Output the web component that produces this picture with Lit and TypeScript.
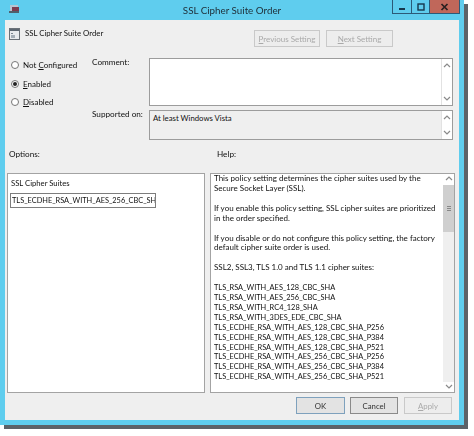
import { LitElement, html, css, svg } from "lit";
import { customElement } from "lit/decorators.js";

const helpText = [
  ["This policy setting determines the cipher suites used by the", "Secure Socket Layer (SSL)."],
  ["If you enable this policy setting, SSL cipher suites are prioritized", "in the order specified."],
  ["If you disable or do not configure this policy setting, the factory", "default cipher suite order is used."],
  ["SSL2, SSL3, TLS 1.0 and TLS 1.1 cipher suites:"],
];
const suites = [
  "TLS_RSA_WITH_AES_128_CBC_SHA",
  "TLS_RSA_WITH_AES_256_CBC_SHA",
  "TLS_RSA_WITH_RC4_128_SHA",
  "TLS_RSA_WITH_3DES_EDE_CBC_SHA",
  "TLS_ECDHE_RSA_WITH_AES_128_CBC_SHA_P256",
  "TLS_ECDHE_RSA_WITH_AES_128_CBC_SHA_P384",
  "TLS_ECDHE_RSA_WITH_AES_128_CBC_SHA_P521",
  "TLS_ECDHE_RSA_WITH_AES_256_CBC_SHA_P256",
  "TLS_ECDHE_RSA_WITH_AES_256_CBC_SHA_P384",
  "TLS_ECDHE_RSA_WITH_AES_256_CBC_SHA_P521",
];

const up = svg`<path d="M2 6 L5 3 L8 6" fill="none" stroke="#8a8a8a" stroke-width="1.2"/>`;
const down = svg`<path d="M2 3 L5 6 L8 3" fill="none" stroke="#8a8a8a" stroke-width="1.2"/>`;
const arrow = (p: unknown) => html`<svg class="arrow" width="10" height="9" viewBox="0 0 10 9">${p}</svg>`;

@customElement("app-root")
export class AppRoot extends LitElement {
  static styles = css`
    :host { display: block; width: 474px; height: 436px; background: #fff; overflow: hidden;
      font-family: "Lato", "Noto Sans", sans-serif; font-size: 8px; color: #111; white-space: nowrap; }
    * { box-sizing: border-box; }
    .window { width: 464px; height: 425px; background: #5fcdee; padding: 0 5px 5px 5px;
      box-shadow: 4px 4px 0 #5c6268; display: flex; flex-direction: column; filter: blur(0.3px); }
    .titlebar { height: 20px; flex: none; display: grid; grid-template-columns: 1fr auto 1fr; align-items: center; }
    .app { display: block; margin-left: 3px; margin-top: -1px; }
    .title { font-size: 9.8px; color: #20323c; margin-top: -1px; }
    .controls { justify-self: end; align-self: start; display: flex; height: 14px; border: 1px solid #2c5a78; border-top: none; margin-right: -1px; }
    .controls span { display: flex; align-items: center; justify-content: center; width: 18px; }
    .controls .close { width: 30px; background: #c0675a; }
    .controls span + span { border-left: 1px solid #2c5a78; }
    .body { flex: 1; background: #efefef; padding: 8px 6px 0 2px; display: flex; flex-direction: column; min-height: 0; }
    .head { display: flex; justify-content: space-between; height: 20px; padding-right: 60px; padding-left: 2px; flex: none; }
    .doc { display: flex; align-items: flex-start; gap: 5px; font-size: 7.8px; line-height: 11px; }
    .nav { display: flex; gap: 6px; margin-top: 2px; }
    .btn { height: 17px; border: 1px solid #c9c9c9; background: #ededed; display: flex; align-items: center; justify-content: center; color: #a9a9a9; font-size: 8px; }
    .nav .btn:first-child { width: 66px; }
    .nav .btn:last-child { width: 67px; }
    u { text-decoration-thickness: 1px; text-underline-offset: 1px; }
    .config { display: grid; grid-template-columns: 85px 57px 304px; margin-top: 14px; height: 82px; flex: none; }
    .radios { display: flex; flex-direction: column; gap: 7.6px; margin-top: -2.5px; padding-left: 4px; }
    .radio { display: flex; align-items: center; gap: 4px; height: 11px; }
    .dot { width: 8px; height: 8px; border-radius: 50%; border: 1px solid #777; background: #fff; display: flex; align-items: center; justify-content: center; flex: none; }
    .dot i { width: 4px; height: 4px; border-radius: 50%; background: #222; }
    .labels { display: flex; flex-direction: column; gap: 39px; margin-top: -6.5px; font-size: 8.2px; }
    .labels span { line-height: 13px; height: 13px; }
    .boxes { display: flex; flex-direction: column; gap: 4px; margin-top: -4px; }
    .box { border: 1px solid #9c9c9c; display: flex; }
    .box.comment { height: 48px; background: #fff; }
    .box.support { height: 30px; background: #efefef; }
    .box .txt { flex: 1; padding: 2px 3px; font-size: 7.75px; }
    .bar { width: 11px; flex: none; background: #fff; display: flex; flex-direction: column; align-items: center; justify-content: space-between; padding: 2px 0; border-left: 1px solid #e2e2e2; }
    .panes-head { display: grid; grid-template-columns: 208px 1fr; padding-left: 2px; margin-top: 4px; height: 25px; line-height: 13px; font-size: 8.2px; flex: none; }
    .panes { display: grid; grid-template-columns: 198px 245px; gap: 5px; height: 213px; flex: none; }
    .pane { border: 1px solid #a3a3a3; background: #fff; }
    .options { padding: 3px 2px; font-size: 7.7px; }
    .options p { margin: 0 0 4px 1px; line-height: 12px; }
    .input { width: 146px; height: 15px; border: 1px solid #7d7d7d; padding: 0 1px; line-height: 13px; overflow: hidden; color: #111; font-size: 7.4px; }
    .help { display: flex; }
    .text { flex: 1; padding: 0 3px; overflow: hidden; }
    .text p { margin: 0 0 10px; }
    .text div { height: 9.9px; line-height: 9.9px; }
    .text .list { font-size: 7.4px; }
    .scroll { width: 11px; flex: none; display: flex; flex-direction: column; align-items: center; padding-bottom: 1px; }
    .scroll .track { width: 100%; height: 47px; background: #cfcfcf; display: flex; align-items: center; justify-content: center; margin-top: 2px; }
    .scroll .grip { width: 4px; height: 5px; background: repeating-linear-gradient(#888 0 1px, transparent 1px 2px); }
    .scroll .sp { flex: 1; background: #efefef; width: 100%; }
    .footer { display: flex; justify-content: flex-end; gap: 5px; margin-top: 11px; padding-right: 1px; flex: none; }
    .footer .btn { width: 48px; height: 17px; font-size: 7.8px; }
    .footer .ok { border: 1px solid #7ea1bd; background: #e3e3e3; color: #333; width: 49px; }
    .footer .cancel { border: 1px solid #8a8a8a; background: #e3e3e3; color: #333; margin-right: 1px; }
  `;

  render() {
    return html`<div class="window">
      <div class="titlebar">
        <svg class="app" width="13" height="11" viewBox="0 0 13 11">
          <rect x="2" y="1" width="8" height="6" fill="#b8c4d0"/>
          <rect x="4" y="3" width="7" height="5" fill="#7b3b4e"/>
          <rect x="1" y="7" width="10" height="2" fill="#50606c"/>
        </svg>
        <div class="title">SSL Cipher Suite Order</div>
        <div class="controls">
          <span><svg width="8" height="8" viewBox="0 0 8 8"><rect x="1" y="5" width="6" height="2" fill="#16384e"/></svg></span>
          <span><svg width="8" height="8" viewBox="0 0 8 8"><rect x="1" y="1" width="6" height="6" fill="none" stroke="#16384e" stroke-width="1.4"/></svg></span>
          <span class="close"><svg width="9" height="8" viewBox="0 0 9 8"><path d="M1.5 1 L7.5 7 M7.5 1 L1.5 7" stroke="#2a2020" stroke-width="1.7"/></svg></span>
        </div>
      </div>
      <div class="body">
        <div class="head">
          <div class="doc">
            <svg width="11" height="12" viewBox="0 0 11 12">
              <rect x="0.5" y="0.5" width="10" height="11" fill="#e8ebee" stroke="#6a7178"/>
              <rect x="1" y="1" width="9" height="2" fill="#5c6670"/>
              <rect x="2" y="5" width="2" height="1" fill="#7a8590"/>
              <rect x="2" y="7" width="4" height="3" fill="#a5afb8"/>
            </svg>
            <span>SSL Cipher Suite Order</span>
          </div>
          <div class="nav">
            <div class="btn"><span><u>P</u>revious Setting</span></div>
            <div class="btn"><span><u>N</u>ext Setting</span></div>
          </div>
        </div>
        <div class="config">
          <div class="radios">
            <div class="radio"><div class="dot"></div><span>Not <u>C</u>onfigured</span></div>
            <div class="radio"><div class="dot"><i></i></div><span><u>E</u>nabled</span></div>
            <div class="radio"><div class="dot"></div><span><u>D</u>isabled</span></div>
          </div>
          <div class="labels"><span>Comment:</span><span>Supported on:</span></div>
          <div class="boxes">
            <div class="box comment"><div class="txt"></div><div class="bar">${arrow(up)}${arrow(down)}</div></div>
            <div class="box support"><div class="txt">At least Windows Vista</div><div class="bar">${arrow(up)}${arrow(down)}</div></div>
          </div>
        </div>
        <div class="panes-head"><span>Options:</span><span>Help:</span></div>
        <div class="panes">
          <div class="pane options">
            <p>SSL Cipher Suites</p>
            <div class="input">TLS_ECDHE_RSA_WITH_AES_256_CBC_SHA_P256</div>
          </div>
          <div class="pane help">
            <div class="text">
              ${helpText.map((g) => html`<p>${g.map((l) => html`<div>${l}</div>`)}</p>`)}
              <p class="list">${suites.map((l) => html`<div>${l}</div>`)}</p>
            </div>
            <div class="scroll">
              ${arrow(up)}
              <div class="track"><div class="grip"></div></div>
              <div class="sp"></div>
              ${arrow(down)}
            </div>
          </div>
        </div>
        <div class="footer">
          <div class="btn ok">OK</div>
          <div class="btn cancel">Cancel</div>
          <div class="btn"><span><u>A</u>pply</span></div>
        </div>
      </div>
    </div>`;
  }
}
